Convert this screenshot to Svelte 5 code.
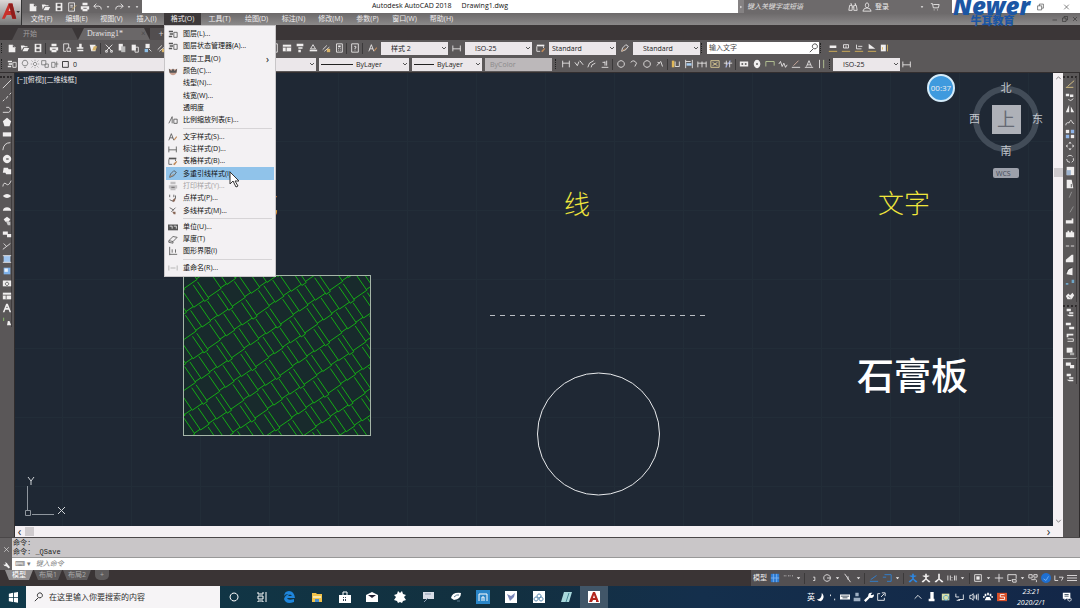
<script lang="ts">
  type Shape = [paint: string, d: string];

  // "f" fills and "s" strokes; a colour may follow, otherwise currentColor is used
  const icons: Record<string, Shape[]> = {
    new: [["f", "M2 2h5l3 3v6H2z"], ["f#5b5859", "M7 2v3h3z"]],
    open: [["f", "M1 3h4l1 1h3v1H4L2 9z"], ["f", "M5 6h6L9 10H3z"]],
    save: [["f", "M2 1h8v10H2z"], ["f#5b5859", "M4 2h4v3H4zM4 7h4v3H4z"]],
    saveas: [["s", "M2 1h7v10H2zM4 4h3M4 6h3"], ["s#d8b46a", "M6 9l5-5"]],
    print: [["f", "M3 1h6v3H3zM1 5h10v4H1zM3 9h6v2H3z"], ["f#5b5859", "M4 7h4v1H4z"]],
    preview: [["s", "M2 1h6v5M2 1v9h3"], ["s", "M6 6h4v4H6zM10 10l1 1"]],
    publish: [["f", "M5 1h3v4H5zM2 5h8v2H2zM3 8h7v2H3z"]],
    globe: [["f", "M2 2h7v8H4z"], ["f#d8b46a", "M7 4h4l-2 5H5z"]],
    undo: [["s", "M4 2L1 5l3 3M1 5h6q3 0 3 4"]],
    redo: [["s", "M8 2l3 3-3 3M11 5H5Q2 5 2 9"]],
    cut: [["s", "M2 2l7 7M10 2L3 9M2 9h2v2H2zM8 9h2v2H8z"]],
    copy: [["f", "M2 1h5v8H2z"], ["f#bbb", "M5 4h5v7H5z"]],
    paste: [["f", "M2 2h5v7H2z"], ["s", "M6 5h4v6H6z"]],
    match: [["f", "M3 1h5v5H3z"], ["f#8fc0e8", "M2 7h4v4H2z"], ["s", "M7 7l3 3"]],
    block: [["s", "M2 8l5-5M4 10l6-5"], ["f#d8b46a", "M7 7h4v4H7z"]],
    table: [["f", "M1 2h10v8H1z"], ["s#5b5859", "M1 5h10M5 5v5"]],
    calc: [["s", "M3 1h7v10H3z"], ["f", "M5 3h3v2H5zM5 6h1v1H5zM7 6h1v1H7zM5 8h1v1H5zM7 8h1v1H7z"]],
    list: [["f", "M2 1h8v3H2zM4 5h5v2H4zM4 8h3v3H4z"]],
    palette: [["f", "M2 8h9v2H2z"], ["s", "M3 7l3-5 3 5z"]],
    help: [["s", "M2 1h8v10H2z"], ["s", "M5 4h2v2H6v1M6 8v1"]],
    textstyle: [["s", "M1 10L4 2l3 8M2 7h4"], ["f#c08a5a", "M7 9l3-4 1 1-3 4z"]],
    dimstyle: [["s", "M1 3v7M10 3v7M1 7h9"]],
    tablestyle: [["f", "M1 2h9v2H1z"], ["s", "M1 4v6h4M9 4v2"], ["f#c08a5a", "M6 10l4-4 1 1-3 4z"]],
    leader: [["s", "M2 10l1-4 4-4 3 2-3 4z"], ["s#c08a5a", "M2 10l5-4"]],
    wall: [["s#e0b858", "M1 10h10"], ["f", "M2 3h8v3H2z"]],
    lampbase: [["s#e0b858", "M1 10h10"], ["s", "M3 2h6v4H3zM6 3v3"]],
    plates: [["s#e0b858", "M1 10h10"], ["s", "M3 2v5h6M5 4h5"]],
    ramp: [["s#e0b858", "M1 10h10"], ["f", "M2 1l8 6H2z"]],
    door: [["f", "M1 2h6v8H1z"], ["s#e0b858", "M9 2v8M3 5v3"]],
    hdim: [["s", "M2 2v8M10 2v8M2 5h8"]],
    aligned: [["s", "M1 4l3 4M6 3l-2 5M7 2l4 5"]],
    arclen: [["s", "M1 10l2-5 5-3M5 10l1-3 4-2"]],
    ordinate: [["s", "M2 10h8M6 3v5M3 4h3M8 2v6"]],
    circledim: [["s", "M6 2a4 4 0 1 0 .1 0z"]],
    jogged: [["s", "M2 4q4-4 7 1l-2 4"]],
    angular: [["s", "M2 8l5-5 2 6M3 4l3 1"]],
    quickdim: [["f#e0b858", "M1 2h3v8H1z"], ["s", "M5 3v6h5V3"]],
    baseline: [["s", "M2 1v10M10 1v10M2 3h6"], ["f#a8cdf0", "M3 5h6v3H3z"]],
    contdim: [["s", "M1 3v7M6 3v7M11 3v7M1 5h10"]],
    space: [["s#e8d69a", "M1 2h10v8H1zM3 4l6 4M9 4L3 8"]],
    breakdim: [["s", "M1 5h10M4 2v8M8 2v8"], ["s#8fa0e8", "M3 10l6-8"]],
    tolerance: [["f", "M1 3h10v6H1z"], ["f#444", "M3 5h2v2H3zM7 5h2v2H7z"]],
    center: [["f", "M6 1a4 5 0 1 0 .1 0z"], ["f#444", "M5 5h2v2H5z"]],
    inspect: [["s#bfcf9a", "M1 3h10v5M1 3v6"]],
    jogline: [["s", "M1 6l2-3 2 6 2-4 2 5 2-3"]],
    editdim: [["s", "M1 10h10"], ["s#e0b8a8", "M3 8l6-6"]],
    edittext: [["s", "M1 10h10M3 9l3-7 3 7M4 7h4"]],
    bars: [["s", "M3 1v10"], ["s#bfcf9a", "M8 1v10"]],
    layers: [["f", "M1 2h5v2H1zM2 5h4v2H2zM1 8h4v2H1z"], ["s", "M7 4h4v6H7z"]],
    bulb: [["s", "M4 8Q1 5 4 2q2-1 4 0 3 3 0 6zM5 10h2"]],
    sun: [["s", "M6 4a2 2 0 1 0 .1 0zM6 1v1M6 10v1M1 6h1M10 6h1M2 2l1 1M9 9l1 1M10 2L9 3M3 9l-1 1"]],
    freeze: [["s", "M2 2h5v5H2zM6 6h4v4H6z"]],
    lock: [["s", "M2 4h4v6H2zM6 6h4M8 3v7"]],
    square: [["s#222", "M3 3h7v7H3z"]],
    line: [["s", "M1 11L11 1"]],
    xline: [["s", "M1 11l2-2M5 8l2-3M9 3l2-2"]],
    pline: [["s", "M1 10h7q3-1 2-4T5 4"]],
    polygon: [["f", "M6 1l5 4-2 6H3L1 5z"]],
    rect: [["f", "M1 4h10v5H1z"]],
    arc: [["s", "M1 11Q2 2 10 2"]],
    circle: [["f", "M6 1a5 5 0 1 0 .1 0z"], ["f#777", "M5 5h3v2H5z"]],
    cloud: [["f", "M2 2h5l1 2h3v6H5L4 8H1z"]],
    spline: [["s", "M1 9q1-6 4-3t6-4"]],
    ellipse: [["f", "M1 6q5-5 10 0-5 5-10 0"]],
    earc: [["f", "M1 8q1-4 5-4t5 4z"]],
    insert: [["f", "M2 4l4-3 4 3-2 3H4z"], ["f#ccc", "M5 7h5v4H7z"]],
    makeblock: [["f", "M1 3h6v4H1zM6 6h5v4H6z"]],
    point: [["s", "M1 10l9-7M2 3l3 3"]],
    hatch: [["f#9ec4ee", "M2 2h8v8H2z"], ["s", "M1 2h10M1 10h10"]],
    gradient: [["f#7fb2ea", "M2 2h8v8H2z"], ["f#e8f1fb", "M3 3h4v4H3z"]],
    region: [["f", "M1 3h10v7H1z"], ["s#555", "M6 5a2 2 0 1 0 .1 0z"]],
    letter: [["f", "M5 1h2l4 10H9L8 8H4l-1 3H1zM6 4L5 6h2z"]],
    addsel: [["s#8fcf6a", "M2 2v4"], ["f", "M7 6h2l2 5H6z"]],
    erase: [["s#e8d08a", "M3 9l8-7M1 10h9"]],
    copyobj: [["f", "M1 2h4v3H1zM6 3h4v3H6z"], ["s", "M4 9q3 3 6-1"]],
    mirror: [["f", "M5 1v9H1zM7 3l4 7H7z"]],
    offset: [["s", "M1 10q0-4 4-3 2-5 3-2t3 3"]],
    array: [["f", "M1 1h4v4H1z"], ["f#8fb4e8", "M7 1h4v4H7zM1 7h4v4H1z"], ["f", "M7 7h4v4H7z"]],
    move: [["f", "M4 3l2-2 2 2zM4 9l2 2 2-2zM3 4L1 6l2 2zM9 4l2 2-2 2z"]],
    rotate: [["s", "M3 3a4 4 0 0 1 6 0M10 5a4 4 0 0 1-2 5M6 10a4 4 0 0 1-4-4"]],
    scale: [["f", "M2 1h9v10H2z"], ["f#9db4d0", "M2 5h5v6H2z"]],
    stretch: [["f", "M2 1h6l2 10H2z"], ["f#444", "M7 6h1v4H7z"]],
    trim: [["s#999", "M5 8l3-7"]],
    extend: [["s#999", "M6 10l4-7"]],
    breakpt: [["f", "M1 5h7V3h2v6H1z"]],
    brk: [["f", "M1 4h2V2h2v2h2V2h2v2h2v6H1z"]],
    join: [["s", "M1 6h4M7 6h4"]],
    chamfer: [["f", "M1 11V8l7-6h2v9z"]],
    fillet: [["f", "M2 10q0-7 7-8v9z"], ["s#333", "M2 8q1-6 6-6"]],
    blend: [["f#6fa6c8", "M1 6h3v2H1zM8 2h3v4H8z"]],
    explode: [["f", "M1 6l3-3 2 2 3-3 2 3-3 5H3z"], ["s#777", "M4 6l3 3"]],
    front: [["f", "M2 1h5v3H2zM5 5h5v2H5zM2 8h8v2H5z"]],
    back: [["f", "M1 2h6v3H1zM5 7h6v3H5z"]],
    above: [["f", "M2 1h8v2H4v2H2z"], ["s", "M3 7h7v3H3"]],
    under: [["f", "M2 2h7v6H2z"], ["f#aaa", "M6 8h5v3H6z"]],
    binoc: [["s", "M2 4h3v6H1zM7 4h3l1 6H7zM3 2h1v2M8 2h1v2M5 6h2"]],
    user: [["s", "M6 1a2 3 0 1 0 .1 0zM1 11q1-4 5-4t5 4z"]],
    cart: [["s", "M1 2h2l1 5h6l1-4H4M5 9v1M9 9v1"]],
    cross: [["s", "M2 2l8 8M10 2L2 10"]],
    restore: [["s", "M1 4h7v7H1zM4 4V1h7v7H8"]],
    minus: [["s", "M1 8h9"]],
    wrench: [["f", "M1 3l2 2 2-2-2-2q4-1 5 3l4 5-2 2-5-4Q1 8 1 3z"]],
    grid: [["f#2d7ad0", "M1 1h10v10H1z"], ["s#7fb4f0", "M4 1v10M8 1v10M1 6h10"]],
    plus: [["s", "M6 1v10M1 6h10"]],
    dots: [["f", "M1 3h1v1H1zM3 3h1v1H3zM6 3h1v1H6zM8 3h1v1H8zM11 3h1v1h-1z"]],
    down: [["f", "M2 4h8L6 9z"]],
    ortho: [["s", "M5 5h2v4H5"]],
    polar: [["s", "M6 2a4 4 0 1 0 .1 0zM6 6h4"]],
    iso: [["s", "M2 1l7 10M6 4v4"]],
    track: [["s#2d86e0", "M1 10h10M2 8l7-5"]],
    osnap: [["s#2d86e0", "M3 2h8v8H6M1 5h4"]],
    man: [["f#2d86e0", "M5 1h2v2h3v1L7 5v2l4 3v1H9L6 8l-3 3H1v-1l4-3V5L2 4V3h3z"]],
    man2: [["f", "M5 1h2v2h3v1L7 5v2l4 3v1H9L6 8l-3 3H1v-1l4-3V5L2 4V3h3z"]],
    man3: [["f", "M5 1h2v6l4 3v1H9L6 8l-3 3H1v-1l4-3z"]],
    ratio: [["s", "M1 3v6M4 3v6M6 5v1M6 8v1M9 3v6M11 3v6"]],
    gear: [["s", "M2 2h8v8H2z"], ["f", "M4 4h4v4H4z"]],
    screen: [["s", "M1 2h10v5M1 2v7h4M6 8h5v3H7z"]],
    isolate: [["s", "M1 2h4v4H1zM7 2h4v3H7zM4 8h4M7 7q4 0 3 4"]],
    accel: [["f#1f6fd0", "M6 0a6 6 0 1 0 .1 0z"], ["s#7ab4f2", "M3 7l3 2 3-5"]],
    clean: [["s", "M1 3v6h4M6 5h5l-2 4"]],
    menu: [["s", "M0 3h12M0 6h12M0 9h12"]],
    windows: [["f", "M1 2l5-1v5H1zM7 1l5-1v6H7zM1 7h5v5l-5-1zM7 7h5v6l-5-1z"]],
    lens: [["s", "M7 1a3 3 0 1 0 .1 0zM5 7l-4 4"]],
    cortana: [["s", "M6 2a4 4 0 1 0 .1 0z"]],
    taskview: [["s", "M2 1v2h5V1M2 5h5v3H2zM2 11v-1h5v1M10 1v10"]],
    edge: [["f#1f86dc", "M1 6q0-6 5-6t6 7H4q1 3 7 1v3Q3 14 1 8q1-4 5-5Q1 3 1 6zM5 5h4q-2-3-4 0z"]],
    folder: [["f#f0c24a", "M1 2h4l1 1h5v8H1z"], ["f#f8e7a8", "M2 5h8v2H2z"], ["f#4a90d0", "M4 8h4v3H4z"]],
    store: [["f", "M0 4h12v8H0z"], ["s", "M4 4V1h4v3"], ["f#345", "M4 6h1v1H4zM6 6h1v1H6zM4 8h1v2H4zM6 8h1v2H6z"]],
    mail: [["f", "M0 4l6-3 6 3v7H0z"], ["f#223", "M2 4h8L6 7z"]],
    puff: [["f", "M4 0l2 2 2-2 1 3 3 1-2 2 2 3-3 1-1 2-2-1-2 1-1-2-3-1 2-3-2-2 3-1z"]],
    pc: [["f#d8dde6", "M1 1h11v7H1z"], ["s#8a9ab0", "M3 3h6M2 11l4-4"]],
    dish: [["f", "M1 7q1-6 10-5 0 6-7 7z"], ["s#5a7a90", "M4 6q3-3 5-2M7 10h3"]],
    maxthon: [["f#2a86c8", "M-1-1h14v14H-1z"], ["s#fff", "M2 10V3h8v7M5 10V6h2v4"]],
    bird: [["f", "M0 0h12v12H0z"], ["f#7a86b8", "M2 3l4 2 4-3-1 4-4 4z"]],
    cloudapp: [["f", "M0 0h12v12H0z"], ["s#5a8ab0", "M3 6a2 2 0 1 0 .1 0zM8 6a2 2 0 1 0 .1 0zM6 3a2 2 0 1 0 .1 0z"]],
    notes: [["f#a8d8dc", "M4 1h8l-3 10H1z"], ["s#4a8a98", "M9 2l-3 9"]],
    acad: [["f", "M0 0h12v12H0z"], ["f#b3261e", "M5 1h2l4 10H8V9H5l-1 2H1zM6 4L5 7h2z"]],
    moon: [["f", "M7 1q5 6-1 10-3 0-5-2 6 0 6-8"]],
    punct: [["s", "M3 3v2M8 8v2"]],
    keyboard: [["f", "M0 3h12v6H0z"], ["s#234", "M1 5h10M3 7h6"]],
    person: [["f#9fb0c4", "M4 1h4v4H4zM2 7h8v4H2z"]],
    spanner: [["f", "M0 10l5-5q0-5 5-4L8 3l1 1 3-1q0 5-5 4l-5 5z"]],
    share: [["s", "M5 2H2v8h8V7M6 6l4-4M7 1h4v4"]],
    up: [["s", "M2 8l4-4 4 4"]],
    usb: [["f", "M4 0h4v8H4zM2 8h7v3H2z"]],
    shield: [["f#d8e0a8", "M1 2h9v8H1z"], ["s#4a9ad0", "M6 4a3 3 0 1 0 .1 0z"]],
    network: [["s", "M1 2v4h4M4 9h6V3M2 10h4"]],
    sound: [["s", "M1 4h2l2-2v8L3 8H1zM7 4v4M9 3v6M11 2v8"]],
    paw: [["f", "M4 6h4l2 4H2zM2 2h2v3H2zM5 1h2v3H5zM8 2h2v3H8zM0 5h2v2H0zM10 5h2v2h-2z"]],
    sogou: [["f#d8502a", "M0 1h12v10H0z"], ["s#fff", "M9 3H4v3h5v3H3"]],
    notice: [["f", "M1 1h9v7H5l-2 2V8H1z"], ["s#345", "M3 3h5M3 5h5"], ["s", "M9 7a2 2 0 1 0 .1 0z"]],
    color: [["f#c9a090", "M1 4h10q0 7-5 7T1 4"], ["f#555", "M1 3l3 3 2-3 2 3 3-3-1 5H2z"]],
    annoscale: [["s", "M1 10l4-8v8M7 5h4v5H7z"]],
    pointstyle: [["s", "M2 2v3M7 2v3M2 8l4 2M9 3v4"], ["f#865", "M5 9l3-3 1 2-2 3z"]],
    mline: [["s", "M2 2l5 3M9 2L4 7"], ["f#865", "M5 7h4v3H7z"]],
    units: [["f", "M0 3h12v7H0z"], ["s#eee", "M2 5h3v3M7 5h3v3"]],
    thickness: [["s", "M1 8l5-5 5 1-5 5zM1 8v2l5 1V9"]],
    limits: [["s", "M2 1v10M2 10h9M5 4v4M9 4v4"]],
    rename: [["s#aaa", "M1 3v6M11 3v6M3 6h6"]],
  };

  const menusBefore = ["文件(F)", "编辑(E)", "视图(V)", "插入(I)"];
  const menusAfter = ["工具(T)", "绘图(D)", "标注(N)", "修改(M)", "参数(P)", "窗口(W)", "帮助(H)"];

  interface Entry {
    label: string;
    icon?: string;
    sub?: boolean;
    off?: boolean;
    active?: boolean;
  }

  const formatMenu: (Entry | null)[] = [
    { label: "图层(L)...", icon: "layers" },
    { label: "图层状态管理器(A)...", icon: "layers" },
    { label: "图层工具(O)", sub: true },
    { label: "颜色(C)...", icon: "color" },
    { label: "线型(N)..." },
    { label: "线宽(W)..." },
    { label: "透明度" },
    { label: "比例缩放列表(E)...", icon: "annoscale" },
    null,
    { label: "文字样式(S)...", icon: "textstyle" },
    { label: "标注样式(D)...", icon: "dimstyle" },
    { label: "表格样式(B)...", icon: "tablestyle" },
    { label: "多重引线样式(I)", icon: "leader", active: true },
    { label: "打印样式(Y)...", icon: "print", off: true },
    { label: "点样式(P)...", icon: "pointstyle" },
    { label: "多线样式(M)...", icon: "mline" },
    null,
    { label: "单位(U)...", icon: "units" },
    { label: "厚度(T)", icon: "thickness" },
    { label: "图形界限(I)", icon: "limits" },
    null,
    { label: "重命名(R)...", icon: "rename" },
  ];

  const split = (s: string) => s.split(" ");

  const quick = split("new open save saveas print undo down redo down down");
  const standard = split(
    "new open save | print preview publish globe | cut copy paste match block | undo redo | move lens lens lens table | calc table list palette block calc | help |"
  );
  const wallTools = split("wall lampbase plates ramp door");
  const dims = split(
    "hdim aligned arclen ordinate | circledim jogged circledim angular | quickdim baseline contdim space breakdim | tolerance center inspect jogline editdim edittext bars"
  );
  const drawTools = split(
    "line xline pline polygon rect arc circle cloud spline ellipse earc insert makeblock point hatch gradient region table letter addsel"
  );
  const modifyTools = split(
    "erase copyobj mirror offset array move rotate scale stretch trim extend breakpt brk join chamfer fillet blend explode"
  );
  const orderTools = split("front back above under");
  const annoTools = split("makeblock front");
  const statusTools = split(
    "grid dots down | ortho polar down iso down | track osnap down | man man2 man3 ratio down | gear down plus screen down isolate accel clean menu"
  );
  const apps = split(
    "cortana taskview edge folder store mail puff pc dish maxthon bird cloudapp notes acad"
  );
  const ime = split("moon punct keyboard person spanner share");
  const tray = split("up usb shield network sound paw sogou");

  // Roof shingle hatch: a 34 unit course repeated every 12 units and shifted by 25.5
  const course =
    "M0 0h6M11 0h7M21 0h9M6 .5h5M30 .5h4M18-.75h3" +
    "M0 0v11.5M6 0v11.25M11 0v10.5M18-.75v11.5M21-.75v11.5M30 0v11";
  const courses: { x: number; y: number }[] = [];
  for (let row = -8; row < 8; row++) {
    const shift = (((row * 25.5) % 34) + 34) % 34;
    for (let col = -4; col < 4; col++) courses.push({ x: shift + col * 34, y: row * 12 });
  }

  let command = $state("");
  let keyword = $state("");
  let findText = $state("");
  let taskSearch = $state("");
</script>

{#snippet icon(name: string)}
  <svg class="icon" viewBox="0 0 12 12" aria-hidden="true">
    {#each icons[name] as [paint, d]}
      {@const color = paint.slice(1) || "currentColor"}
      <path {d} fill={paint[0] === "f" ? color : "none"} stroke={paint[0] === "s" ? color : "none"} />
    {/each}
  </svg>
{/snippet}

{#snippet tools(names: string[])}
  {#each names as name}
    {#if name === "|"}
      <span class="sep"></span>
    {:else}
      <button class="tool" class:narrow={name === "down"} aria-label={name}>{@render icon(name)}</button>
    {/if}
  {/each}
{/snippet}

{#snippet combo(label: string, value: string, kind: string)}
  <span class="combo {kind}">
    {#if kind.includes("layer-list")}
      <span class="layer-state">
        {#each ["bulb", "sun", "freeze", "lock", "square"] as name}{@render icon(name)}{/each}
      </span>
    {/if}
    {#if kind.includes("lined")}<span class="stroke"></span>{/if}
    <select aria-label={label} disabled={kind.includes("off")}><option>{value}</option></select>
    <svg class="chevron" viewBox="0 0 6 6" aria-hidden="true"><path d="M1 2l2 2 2-2" /></svg>
  </span>
{/snippet}

<div class="window">
  <header class="header">
    <button class="logo" aria-label="A">
      <svg viewBox="0 0 22 24" aria-hidden="true">
        <path d="M2 18L9 2h4l4 16h-4l-1-4H7l-2 4z" fill="#c8312c" />
        <path d="M9 10l2-5 1 5z" fill="#d9d3d3" />
        <path d="M9 2h4l4 16h-4z" fill="#8e1d1c" />
        <path d="M17 10h4l-2 2z" fill="#333" />
      </svg>
    </button>
    <div class="title-bar">
      <div class="quick">{@render tools(quick)}</div>
      <h1 class="title"><span>Autodesk AutoCAD 2018</span><span>Drawing1.dwg</span></h1>
      <div class="info">
        <span class="info-arrow">{@render icon("down")}</span>
        <input class="keyword" aria-label="搜索" placeholder="键入关键字或短语" bind:value={keyword} />
        {@render icon("binoc")}
        <button class="sign-in">{@render icon("user")}登录</button>
        <span class="info-end">
          <span class="tiny">{@render icon("down")}</span>
          {@render icon("cart")}
        </span>
      </div>
      <div class="controls">
        <button aria-label="还原">{@render icon("restore")}</button>
        <button aria-label="关闭">{@render icon("cross")}</button>
      </div>
    </div>
    <nav class="menu-bar">
      {#each menusBefore as label}<button class="menu">{label}</button>{/each}
      <div class="menu-host">
        <button class="menu open" aria-expanded="true">格式(O)</button>
        <ul class="popup">
          {#each formatMenu as entry}
            {#if entry}
              <li class:active={entry.active}>
                <button disabled={entry.off}>
                  <span class="slot">{#if entry.icon}{@render icon(entry.icon)}{/if}</span>
                  {entry.label}
                  {#if entry.sub}<span class="sub">›</span>{/if}
                </button>
              </li>
            {:else}
              <li class="rule"></li>
            {/if}
          {/each}
        </ul>
        <svg class="cursor" viewBox="0 0 10 17" aria-hidden="true">
          <path d="M1 1v12l3-3 3 6 2-1-3-5h4z" fill="#fff" stroke="#333" />
        </svg>
      </div>
      {#each menusAfter as label}<button class="menu after">{label}</button>{/each}
      <div class="doc-controls">
        <button aria-label="最小化文档">{@render icon("minus")}</button>
        <button aria-label="还原文档">{@render icon("restore")}</button>
        <button aria-label="关闭文档">{@render icon("cross")}</button>
      </div>
    </nav>
    <div class="brand"><span class="brand-name">Newer</span><span class="brand-sub">牛耳教育</span></div>
  </header>

  <div class="doc-tabs">
    <button class="doc-tab">开始</button>
    <button class="doc-tab current">Drawing1* <span>×</span></button>
    <button class="add" aria-label="新建图形">+</button>
  </div>

  <div class="toolbars">
    <div class="toolbar">
      <span class="grip"></span>
      {@render tools(standard)}
      <span class="lead">{@render icon("textstyle")}</span>
      {@render combo("文字样式", "样式 2", "style inset")}
      <span class="lead">{@render icon("dimstyle")}</span>
      {@render combo("标注样式", "ISO-25", "style inset")}
      <span class="lead">{@render icon("tablestyle")}</span>
      {@render combo("表格样式", "Standard", "style")}
      <span class="lead">{@render icon("leader")}</span>
      {@render combo("多重引线样式", "Standard", "style inset")}
      <span class="grip"></span>
      <label class="find">
        <input aria-label="查找文字" placeholder="输入文字" bind:value={findText} />
        {@render icon("lens")}
      </label>
      <span class="grip"></span>
      <span class="wall-tools">{@render tools(wallTools)}</span>
    </div>
    <div class="toolbar">
      <span class="grip"></span>
      {@render tools(["layers"])}
      {@render combo("图层", "0", "layer-list")}
      {@render combo("线型", "ByLayer", "linetype lined")}
      {@render combo("线宽", "ByLayer", "lineweight lined")}
      {@render combo("打印样式", "ByColor", "plot off")}
      <span class="grip"></span>
      {@render tools(dims)}
      <span class="grip"></span>
      {@render combo("当前标注样式", "ISO-25", "style inset")}
      {@render tools(["dimstyle"])}
    </div>
  </div>

  <main class="work">
    <aside class="rail">
      <div class="rail-group draw">{@render tools(drawTools)}</div>
    </aside>

    <section class="canvas">
      <svg class="drawing" aria-label="Drawing1">
        <defs>
          <pattern id="grid" width="69" height="69" x="47" y="-1" patternUnits="userSpaceOnUse">
            <path d="M.5 0v69M0 .5h69" stroke="#222d38" fill="none" />
          </pattern>
          <clipPath id="board"><rect x="168" y="203" width="187" height="160" /></clipPath>
        </defs>
        <rect width="100%" height="100%" fill="url(#grid)" />
        <g clip-path="url(#board)">
          <rect x="168" y="203" width="187" height="160" fill="#182a2c" />
          <g class="hatch" transform="translate(259.5 280.7) rotate(-34.5) scale(1.75 -1.75)">
            {#each courses as c}<path d={course} transform="translate({c.x} {c.y})" />{/each}
          </g>
        </g>
        <rect class="outline" x="168.5" y="202.5" width="187" height="160" />
        <path class="dashed" d="M475 242.5H694" />
        <circle class="outline bright" cx="583.5" cy="361" r="61" />
        <g class="notes">
          <text x="211" y="141">填充</text>
          <text x="549" y="141">线</text>
          <text x="863" y="140">文字</text>
        </g>
        <text class="board-name" x="842" y="317">石膏板</text>
      </svg>

      <span class="view-label">[−][俯视][二维线框]</span>
      <div class="timer">00:37</div>
      <div class="compass">
        <span class="north">北</span>
        <span class="west">西</span>
        <button class="face">上</button>
        <span class="east">东</span>
        <span class="south">南</span>
      </div>
      <button class="wcs">WCS</button>
      <svg class="ucs" viewBox="0 0 42 44" aria-hidden="true">
        <path d="M3.5 11v25M8 39.5h22M1.5 35.5h5v5h-5z" />
        <path class="axis" d="M4 2l3 4 3-4M7 6v4M34 32l7 7M41 32l-7 7" />
      </svg>
    </section>

    <div class="vscroll">
      <button aria-label="向上">{@render icon("up")}</button>
      <span class="thumb"></span>
      <button class="flip" aria-label="向下">{@render icon("up")}</button>
    </div>

    <div class="hscroll">
      <button aria-label="向左">‹</button>
      <span class="thumb"></span>
      <button aria-label="向右">›</button>
    </div>

    <aside class="rail right">
      <div class="rail-group modify">{@render tools(modifyTools)}</div>
      <div class="rail-group order">{@render tools(orderTools)}</div>
      <div class="rail-group anno">{@render tools(annoTools)}</div>
    </aside>
  </main>

  <section class="command">
    <div class="command-side">
      <button aria-label="关闭命令行">{@render icon("cross")}</button>
      <button aria-label="自定义">{@render icon("wrench")}</button>
    </div>
    <div class="history">
      <p>命令:</p>
      <p>命令: _QSave</p>
    </div>
    <label class="prompt">
      <span>⌨ ▾</span>
      <input aria-label="命令" placeholder="键入命令" bind:value={command} />
    </label>
  </section>

  <footer class="status">
    <div class="layouts">
      <button class="layout current">模型</button>
      <button class="layout">布局1</button>
      <button class="layout">布局2</button>
      <button class="layout more">+</button>
    </div>
    <div class="status-tools">
      <button class="space">模型</button>
      {@render tools(statusTools)}
    </div>
  </footer>

  <div class="taskbar">
    <button class="start" aria-label="开始">{@render icon("windows")}</button>
    <label class="task-search">
      {@render icon("lens")}
      <input aria-label="搜索" placeholder="在这里输入你要搜索的内容" bind:value={taskSearch} />
    </label>
    <div class="apps">
      {#each apps as name}
        <button class:running={name === "acad"} aria-label={name}>{@render icon(name)}</button>
      {/each}
    </div>
    <div class="tray ime"><span>英</span>{@render tools(ime)}</div>
    <div class="tray">{@render tools(tray)}</div>
    <time class="clock"><span>23:21</span><span>2020/2/1</span></time>
    <button class="notice" aria-label="通知">{@render icon("notice")}</button>
  </div>
</div>

<style>
  :global(body) {
    margin: 0;
    background: #1f2834;
  }

  .window {
    display: flex;
    flex-direction: column;
    min-height: 100vh;
    overflow: hidden;
    font-family: "Open Sans", "Noto Sans CJK SC", sans-serif;
    font-size: 7px;
    line-height: 12px;
    color: #f0eeee;
  }

  .window :is(button, input, select) {
    font: inherit;
    color: inherit;
    background: none;
    border: 0;
    border-radius: 0;
    padding: 0;
    margin: 0;
    min-width: 0;
    white-space: nowrap;
  }

  .icon {
    display: block;
    width: 10px;
    height: 10px;
    flex: none;
    overflow: visible;
  }

  .tool {
    display: grid;
    place-items: center;
    width: 13px;
    flex: none;
  }

  .sep {
    width: 1px;
    height: 11px;
    margin: 0 1px;
    background: #3b393a;
    flex: none;
  }

  .grip {
    width: 2px;
    height: 10px;
    margin: 0 1px;
    border-left: 1px dotted #222;
    flex: none;
  }

  /* title and menus */
  .header {
    position: relative;
    display: grid;
    grid-template: 13px 12px / 22px 1fr;
  }

  .logo {
    grid-row: 1 / 3;
  }

  .window .logo {
    background: linear-gradient(#dcd7d7, #777);
    border-right: 1px solid #333;
  }

  .logo svg {
    display: block;
    width: 21px;
    height: 24px;
  }

  .title-bar {
    display: flex;
    align-items: stretch;
    background: #fff;
  }

  .quick {
    display: flex;
    align-items: center;
    width: 120px;
    background: #686566;
    padding-left: 4px;
    box-sizing: border-box;
  }

  .quick .tool.narrow {
    width: 8px;
  }

  .quick .narrow .icon,
  .tiny .icon {
    width: 4px;
  }

  .title {
    display: flex;
    gap: 10px;
    flex: 1;
    justify-content: center;
    margin: 0;
    font-size: 7px;
    font-weight: 400;
    color: #111;
  }

  .info {
    display: flex;
    align-items: center;
    width: 214px;
    background: #6d6a6b;
  }

  .info-arrow {
    display: grid;
    place-items: center;
    width: 6px;
    height: 100%;
    background: #858283;
  }

  .info-arrow .icon {
    width: 4px;
    transform: rotate(-90deg);
  }

  .window .keyword {
    width: 98px;
    margin: 0 3px;
    font-style: italic;
  }

  .sign-in {
    display: flex;
    align-items: center;
    gap: 3px;
  }

  .window .sign-in {
    margin-left: 4px;
  }

  .info-end {
    display: flex;
    align-items: center;
    gap: 6px;
    margin-left: auto;
    padding-right: 12px;
  }

  .controls {
    display: flex;
    width: 128px;
    justify-content: flex-end;
    gap: 19px;
    padding-right: 10px;
    box-sizing: border-box;
    color: #333;
  }

  .controls .icon {
    width: 7px;
  }

  .menu-bar {
    display: flex;
    padding-left: 2px;
    background: linear-gradient(#6c696a, #8b8989);
  }

  .window .menu {
    width: 35px;
    line-height: 12px;
    flex: none;
  }

  .window .menu.after {
    width: 37px;
  }

  .menu-host {
    position: relative;
    flex: none;
  }

  .window .menu.open {
    display: block;
    width: 37px;
    background: #3d393a;
  }

  .doc-controls {
    display: flex;
    gap: 4px;
    margin-left: auto;
    padding-right: 2px;
    color: #222;
  }

  .doc-controls .icon {
    width: 6px;
  }

  .popup {
    position: absolute;
    z-index: 2;
    top: 100%;
    left: 0;
    display: flex;
    flex-direction: column;
    width: 112px;
    height: 252px;
    box-sizing: border-box;
    margin: 0;
    padding: 2px 1px;
    list-style: none;
    background: #f3f1f3;
    border: 1px solid #c8c6c8;
    color: #111;
  }

  .popup li {
    flex: 1;
    display: flex;
  }

  .popup li.active {
    background: #90c3ea;
  }

  .popup li.rule {
    flex: 0 0 1px;
    margin: 1px 2px 2px 17px;
    background: #d6d4d6;
  }

  .popup button {
    display: flex;
    align-items: center;
    flex: 1;
    text-align: left;
  }

  .popup button:disabled {
    color: #a3a1a3;
  }

  .slot {
    width: 15px;
    margin-left: 2px;
    color: #555;
  }

  .popup button:disabled .slot {
    color: #c0bec0;
  }

  .sub {
    margin-left: auto;
    padding-right: 5px;
    font-size: 10px;
  }

  .cursor {
    position: absolute;
    z-index: 3;
    top: 158px;
    left: 65px;
    width: 10px;
    height: 17px;
  }

  .brand {
    position: absolute;
    z-index: 1;
    top: 0;
    right: 50px;
    display: grid;
    justify-items: center;
    color: #1c56a4;
    font-weight: 800;
  }

  .brand-name {
    font-family: "Open Sans", sans-serif;
    font-size: 24px;
    line-height: 12px;
    font-style: italic;
  }

  .brand-sub {
    font-size: 11px;
    line-height: 18px;
    padding-left: 2px;
  }

  /* document tabs */
  .doc-tabs {
    display: flex;
    align-items: flex-end;
    height: 15px;
    padding-left: 12px;
    background: #3b3637;
  }

  .window .doc-tab {
    width: 66px;
    height: 12px;
    padding-left: 11px;
    text-align: left;
    color: #a19e9f;
    background: #524e4f;
    clip-path: polygon(6px 0, 60px 0, 100% 100%, 0 100%);
  }

  .window .doc-tab.current {
    width: 72px;
    padding-left: 9px;
    font-family: "Liberation Serif", serif;
    font-size: 8px;
    color: #e6e4e4;
    background: #6a6768;
    clip-path: polygon(6px 0, 66px 0, 100% 100%, 0 100%);
  }

  .doc-tab span {
    padding-left: 16px;
    color: #444;
  }

  .window .add {
    width: 22px;
    height: 12px;
    background: #524e4f;
    color: #ccc;
    font-size: 9px;
  }

  /* toolbars */
  .toolbars {
    background: #5b5859;
    border-bottom: 1px solid #332f30;
  }

  .toolbar {
    display: flex;
    align-items: center;
    height: 16px;
  }

  .lead {
    display: grid;
    place-items: center;
    width: 17px;
    flex: none;
  }

  .wall-tools {
    display: flex;
    padding-left: 2px;
  }

  .combo {
    position: relative;
    display: flex;
    align-items: center;
    height: 13px;
    flex: none;
    color: #222;
    background: #ebe7ea;
  }

  .combo select {
    flex: 1;
    height: 13px;
    line-height: 13px;
    appearance: none;
    outline: 0;
  }

  .window .combo select {
    padding-left: 3px;
  }

  .window .combo.inset select {
    padding-left: 10px;
  }

  .chevron {
    width: 6px;
    height: 6px;
    margin-right: 1px;
    fill: none;
    stroke: #555;
  }

  .combo.style {
    width: 67px;
  }

  .combo.layer-list {
    width: 298px;
  }

  .combo.linetype {
    width: 90px;
    margin-left: 3px;
  }

  .combo.lineweight {
    width: 70px;
    margin-left: 3px;
  }

  .combo.plot {
    width: 67px;
    margin: 0 2px 0 3px;
  }

  .window .combo.plot select {
    padding-left: 5px;
  }

  .combo.off {
    background: #bcb8ba;
    color: #777;
  }

  .combo.off .chevron {
    display: none;
  }

  .layer-state {
    display: flex;
    padding-left: 2px;
    color: #777;
  }

  .stroke {
    width: 32px;
    height: 1px;
    margin-left: 2px;
    background: #222;
  }

  .lineweight .stroke {
    width: 20px;
  }

  .find {
    display: flex;
    align-items: center;
    width: 112px;
    height: 12px;
    margin-left: 2px;
    background: #fff;
    color: #333;
    flex: none;
  }

  .find input {
    flex: 1;
  }

  .window .find input {
    padding-left: 2px;
  }

  .window ::placeholder {
    color: inherit;
    opacity: 0.9;
  }

  /* work area */
  .work {
    flex: 1;
    display: grid;
    grid-template: minmax(453px, 1fr) 11px / 15px 1fr 10px 17px;
    border-bottom: 1px solid #4a4748;
  }

  .rail {
    grid-row: 1 / 3;
    grid-column: 1;
    background: #5a5758;
    border-right: 1px solid #2f2c2d;
  }

  .rail.right {
    grid-column: 4;
  }

  .rail-group {
    display: grid;
    grid-auto-rows: 1fr;
    justify-items: center;
    margin-right: 2px;
    border-top: 2px dotted #2c292a;
    border-right: 1px solid #403d3e;
  }

  .rail-group.draw,
  .rail-group.modify {
    margin-top: 3px;
  }

  .rail-group.draw {
    height: 249px;
  }

  .rail-group.modify {
    height: 224px;
  }

  .rail-group.order {
    height: 50px;
    margin-top: 3px;
  }

  .rail-group.anno {
    height: 25px;
    margin-top: 1px;
    border-top: 1px solid #aaa;
  }

  .canvas {
    position: relative;
    grid-row: 1;
    grid-column: 2;
    overflow: hidden;
    background: #1f2834;
  }

  .drawing {
    position: absolute;
    inset: 0;
    width: 100%;
    height: 100%;
  }

  .hatch {
    fill: none;
    stroke: #15b015;
    stroke-width: 0.5;
  }

  .outline {
    fill: none;
    stroke: #a5b5a8;
  }

  .outline.bright {
    stroke: #e8eaec;
  }

  .dashed {
    stroke: #b9bec4;
    stroke-dasharray: 5 5;
  }

  .notes {
    font-family: "Noto Sans CJK SC", sans-serif;
    font-size: 26px;
    font-weight: 300;
    fill: #f0e63c;
  }

  .board-name {
    font-family: "Noto Sans CJK SC", sans-serif;
    font-size: 37px;
    font-weight: 500;
    fill: #fff;
  }

  .view-label {
    position: absolute;
    top: 1px;
    left: 2px;
  }

  .timer {
    position: absolute;
    top: 1px;
    right: 98px;
    width: 24px;
    border: 2px solid #d4ecfa;
    border-radius: 50%;
    background: #3f9ade;
    font-size: 8px;
    line-height: 24px;
    text-align: center;
  }

  .compass {
    position: absolute;
    top: 5px;
    right: 6px;
    display: grid;
    grid-template: 19px 44px 19px / 19px 44px 19px;
    place-items: center;
    font-size: 11px;
    color: #c2c6cc;
  }

  .compass::before {
    content: "";
    grid-area: 1 / 1 / 4 / 4;
    width: 54px;
    height: 54px;
    border: 6px solid #424c58;
    border-radius: 50%;
  }

  .north {
    grid-area: 1 / 2;
  }

  .west {
    grid-area: 2 / 1;
  }

  .window .face {
    grid-area: 2 / 2;
    width: 29px;
    height: 29px;
    background: #aeb1b8;
    color: #666a74;
    font-size: 18px;
    line-height: 27px;
  }

  .east {
    grid-area: 2 / 3;
  }

  .south {
    grid-area: 3 / 2;
  }

  .window .wcs {
    position: absolute;
    top: 95px;
    right: 34px;
    width: 26px;
    height: 10px;
    padding-left: 3px;
    text-align: left;
    line-height: 9px;
    background: #9da1ab;
    border-radius: 2px;
    color: #444b58;
  }

  .ucs {
    position: absolute;
    bottom: 7px;
    left: 9px;
    width: 42px;
    height: 44px;
    fill: none;
    stroke: #8f969e;
  }

  .axis {
    stroke: #d0d4d8;
  }

  .vscroll,
  .hscroll {
    display: flex;
    background: #f4f0f3;
    color: #333;
  }

  .vscroll {
    grid-row: 1;
    grid-column: 3;
    flex-direction: column;
    align-items: center;
    justify-content: space-between;
  }

  .hscroll {
    grid-row: 2;
    grid-column: 2 / 4;
    gap: 1px;
  }

  .hscroll button {
    width: 9px;
    line-height: 8px;
    font-size: 12px;
  }

  .hscroll button:last-child {
    margin-left: auto;
    margin-right: 10px;
  }

  .thumb {
    width: 9px;
    height: 9px;
    margin: 1px 0;
    background: #cfcbce;
  }

  .vscroll .thumb {
    margin: 85px 0 auto;
  }

  .vscroll .icon {
    width: 7px;
  }

  .flip {
    transform: rotate(180deg);
  }

  /* command line */
  .command {
    display: grid;
    grid-template: 19px 13px / 12px 1fr;
    background: #c9c6c8;
    color: #222;
  }

  .command-side {
    grid-row: 1 / 3;
    display: grid;
    grid-template-rows: 22px 1fr;
    place-items: center;
    background: #646162;
    color: #f2f2f2;
  }

  .command-side .icon {
    width: 7px;
    height: 7px;
  }

  .history {
    padding: 1px 0 0 1px;
    font-family: "Liberation Mono", "Noto Sans CJK SC", monospace;
  }

  .history p {
    margin: 0;
    line-height: 9px;
  }

  .prompt {
    display: flex;
    align-items: center;
    gap: 5px;
    padding-left: 3px;
    background: #fff;
    border-top: 1px solid #999;
    color: #777;
  }

  .prompt input {
    flex: 1;
    font-style: italic;
  }

  /* status bar */
  .status {
    display: flex;
    height: 16px;
    background: #3a3435;
  }

  .layouts {
    display: flex;
    flex: 1;
    gap: 1px;
    padding-left: 5px;
  }

  .window .layout {
    width: 28px;
    height: 10px;
    line-height: 10px;
    background: #5d5a5b;
    color: #aaa;
    clip-path: polygon(0 0, 100% 0, 24px 100%, 4px 100%);
  }

  .window .layout.current {
    background: #918e8f;
    color: #fff;
  }

  .window .layout.more {
    width: 14px;
    margin-left: 3px;
    clip-path: none;
    border-radius: 0 0 5px 5px;
  }

  .status-tools {
    display: flex;
    align-items: center;
    justify-content: space-between;
    width: 329px;
    padding: 0 2px;
    box-sizing: border-box;
    background: #535052;
  }

  .status-tools .tool {
    width: 11px;
  }

  .status-tools .tool.narrow {
    width: 6px;
  }

  .status-tools .narrow .icon {
    width: 5px;
  }

  /* taskbar */
  .taskbar {
    display: flex;
    align-items: stretch;
    height: 22px;
    background: linear-gradient(90deg, #10394a, #12303f 45%, #142f4c 65%, #132748);
    color: #fff;
  }

  .start {
    display: grid;
    place-items: center;
    width: 26px;
  }

  .task-search {
    display: flex;
    align-items: center;
    gap: 5px;
    width: 194px;
    box-sizing: border-box;
    padding-left: 8px;
    background: #f6f4f6;
    color: #111;
    font-size: 8px;
  }

  .task-search input {
    flex: 1;
  }

  .apps {
    display: grid;
    grid-template-columns: repeat(14, 1fr);
    width: 388px;
  }

  .apps button {
    display: grid;
    place-items: center;
  }

  .apps .icon {
    width: 12px;
    height: 12px;
  }

  .window .apps .running {
    background: #415668;
  }

  .tray {
    display: flex;
    align-items: center;
    margin-left: 24px;
  }

  .tray.ime {
    margin-left: auto;
    font-size: 8px;
  }

  .tray .tool {
    width: 12px;
  }

  .tray:not(.ime) .tool {
    width: 14px;
  }

  .clock {
    display: grid;
    align-content: center;
    width: 44px;
    font-style: italic;
    line-height: 11px;
    text-align: center;
  }

  .notice {
    display: grid;
    place-items: center;
    width: 27px;
  }
</style>
